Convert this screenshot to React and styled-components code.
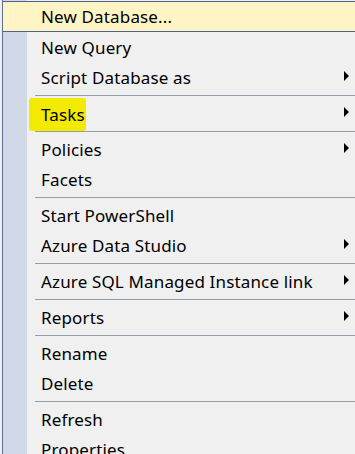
import React from "react";
import styled, { createGlobalStyle } from "styled-components";

const Global = createGlobalStyle`
  html, body { margin: 0; padding: 0; background: #f0f0f0; overflow: hidden; }
  body { width: 355px; height: 454px; }
`;

const Menu = styled.div`
  margin-left: 2px;
  padding-top: 1px;
  height: 453px;
  border-left: 1px solid #5f6f92;
  background: linear-gradient(to right, #d1d8e6 0, #d1d8e6 24px, #f0f0f0 24px);
  display: flex;
  flex-direction: column;
  font-family: "Noto Sans", "Open Sans", sans-serif;
  font-size: 17px;
  letter-spacing: 0.15px;
  color: #000;
  overflow: hidden;
`;

const Item = styled.div`
  box-sizing: border-box;
  flex: 0 0 auto;
  height: ${(p) => (p.$active ? "31px" : "30px")};
  display: flex;
  align-items: center;
  justify-content: space-between;
  padding: 0 6px 0 38px;
  margin-left: ${(p) => (p.$active ? "-1px" : "0")};
  background: ${(p) => (p.$active ? "#fff4c4" : "transparent")};
  border: ${(p) => (p.$active ? "1px solid #4b6090" : "none")};
  border-right: none;
  white-space: nowrap;
`;

const Label = styled.span`
  line-height: 20px;
  margin-top: 1px;
`;

const Marked = styled.span`
  display: inline-block;
  background: #f2ea00;
  border-radius: 3px;
  line-height: 33px;
  padding: 0 1px 0 12px;
  margin-left: -12px;
  margin-top: 3px;
`;

const Arrow = styled.span`
  width: 0;
  height: 0;
  border-left: 5px solid #000;
  border-top: 5px solid transparent;
  border-bottom: 5px solid transparent;
  margin-top: -2px;
`;

const Separator = styled.div`
  flex: 0 0 6px;
  margin-left: 32px;
  display: flex;
  align-items: center;
  &::after {
    content: "";
    flex: 1;
    height: 1px;
    background: #959cab;
  }
`;

const items = [
  { label: "New Database...", active: true },
  { label: "New Query" },
  { label: "Script Database as", sub: true },
  { sep: true },
  { label: "Tasks", sub: true, mark: true },
  { sep: true },
  { label: "Policies", sub: true },
  { label: "Facets" },
  { sep: true },
  { label: "Start PowerShell" },
  { label: "Azure Data Studio", sub: true },
  { sep: true },
  { label: "Azure SQL Managed Instance link", sub: true },
  { sep: true },
  { label: "Reports", sub: true },
  { sep: true },
  { label: "Rename" },
  { label: "Delete" },
  { sep: true },
  { label: "Refresh" },
  { label: "Properties" },
];

export default function App() {
  return (
    <>
      <Global />
      <Menu>
        {items.map((it, i) =>
          it.sep ? (
            <Separator key={i} />
          ) : (
            <Item key={i} $active={it.active}>
              {it.mark ? <Marked>{it.label}</Marked> : <Label>{it.label}</Label>}
              {it.sub && <Arrow />}
            </Item>
          )
        )}
      </Menu>
    </>
  );
}
